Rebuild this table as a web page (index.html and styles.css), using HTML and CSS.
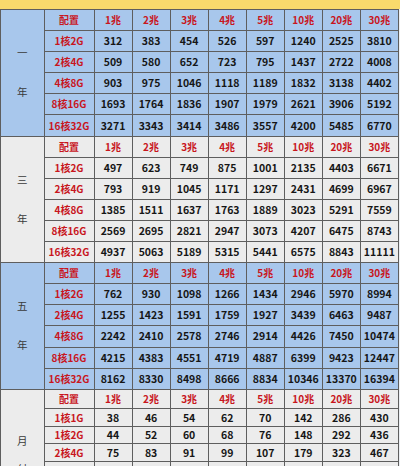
FILE: index.html
```html
<!DOCTYPE html>
<html lang="zh">
<head>
<meta charset="utf-8">
<link rel="stylesheet" href="styles.css">
</head>
<body>
<div class="band"></div>
<table class="price">
  <colgroup>
    <col class="c-side"><col class="c-cfg">
    <col class="c-n"><col class="c-n"><col class="c-n"><col class="c-n">
    <col class="c-n"><col class="c-n"><col class="c-n"><col class="c-n">
  </colgroup>
  <tbody class="blue">
    <tr class="head"><td class="side" rowspan="6"><div class="vlabel"><span>一</span><span>年</span></div></td><td class="red">配置</td><td class="red">1兆</td><td class="red">2兆</td><td class="red">3兆</td><td class="red">4兆</td><td class="red">5兆</td><td class="red">10兆</td><td class="red">20兆</td><td class="red">30兆</td></tr>
    <tr><td class="red">1核2G</td><td>312</td><td>383</td><td>454</td><td>526</td><td>597</td><td>1240</td><td>2525</td><td>3810</td></tr>
    <tr><td class="red">2核4G</td><td>509</td><td>580</td><td>652</td><td>723</td><td>795</td><td>1437</td><td>2722</td><td>4008</td></tr>
    <tr><td class="red">4核8G</td><td>903</td><td>975</td><td>1046</td><td>1118</td><td>1189</td><td>1832</td><td>3138</td><td>4402</td></tr>
    <tr><td class="red">8核16G</td><td>1693</td><td>1764</td><td>1836</td><td>1907</td><td>1979</td><td>2621</td><td>3906</td><td>5192</td></tr>
    <tr><td class="red">16核32G</td><td>3271</td><td>3343</td><td>3414</td><td>3486</td><td>3557</td><td>4200</td><td>5485</td><td>6770</td></tr>
  </tbody>
  <tbody class="grey">
    <tr class="head"><td class="side" rowspan="6"><div class="vlabel"><span>三</span><span>年</span></div></td><td class="red">配置</td><td class="red">1兆</td><td class="red">2兆</td><td class="red">3兆</td><td class="red">4兆</td><td class="red">5兆</td><td class="red">10兆</td><td class="red">20兆</td><td class="red">30兆</td></tr>
    <tr><td class="red">1核2G</td><td>497</td><td>623</td><td>749</td><td>875</td><td>1001</td><td>2135</td><td>4403</td><td>6671</td></tr>
    <tr><td class="red">2核4G</td><td>793</td><td>919</td><td>1045</td><td>1171</td><td>1297</td><td>2431</td><td>4699</td><td>6967</td></tr>
    <tr><td class="red">4核8G</td><td>1385</td><td>1511</td><td>1637</td><td>1763</td><td>1889</td><td>3023</td><td>5291</td><td>7559</td></tr>
    <tr><td class="red">8核16G</td><td>2569</td><td>2695</td><td>2821</td><td>2947</td><td>3073</td><td>4207</td><td>6475</td><td>8743</td></tr>
    <tr><td class="red">16核32G</td><td>4937</td><td>5063</td><td>5189</td><td>5315</td><td>5441</td><td>6575</td><td>8843</td><td>11111</td></tr>
  </tbody>
  <tbody class="blue">
    <tr class="head"><td class="side" rowspan="6"><div class="vlabel"><span>五</span><span>年</span></div></td><td class="red">配置</td><td class="red">1兆</td><td class="red">2兆</td><td class="red">3兆</td><td class="red">4兆</td><td class="red">5兆</td><td class="red">10兆</td><td class="red">20兆</td><td class="red">30兆</td></tr>
    <tr><td class="red">1核2G</td><td>762</td><td>930</td><td>1098</td><td>1266</td><td>1434</td><td>2946</td><td>5970</td><td>8994</td></tr>
    <tr><td class="red">2核4G</td><td>1255</td><td>1423</td><td>1591</td><td>1759</td><td>1927</td><td>3439</td><td>6463</td><td>9487</td></tr>
    <tr><td class="red">4核8G</td><td>2242</td><td>2410</td><td>2578</td><td>2746</td><td>2914</td><td>4426</td><td>7450</td><td>10474</td></tr>
    <tr><td class="red">8核16G</td><td>4215</td><td>4383</td><td>4551</td><td>4719</td><td>4887</td><td>6399</td><td>9423</td><td>12447</td></tr>
    <tr><td class="red">16核32G</td><td>8162</td><td>8330</td><td>8498</td><td>8666</td><td>8834</td><td>10346</td><td>13370</td><td>16394</td></tr>
  </tbody>
  <tbody class="grey month">
    <tr class="head"><td class="side top" rowspan="5"><div class="vlabel tight"><span>月</span><span>付</span></div></td><td class="red">配置</td><td class="red">1兆</td><td class="red">2兆</td><td class="red">3兆</td><td class="red">4兆</td><td class="red">5兆</td><td class="red">10兆</td><td class="red">20兆</td><td class="red">30兆</td></tr>
    <tr><td class="red">1核1G</td><td>38</td><td>46</td><td>54</td><td>62</td><td>70</td><td>142</td><td>286</td><td>430</td></tr>
    <tr><td class="red">1核2G</td><td>44</td><td>52</td><td>60</td><td>68</td><td>76</td><td>148</td><td>292</td><td>436</td></tr>
    <tr><td class="red">2核4G</td><td>75</td><td>83</td><td>91</td><td>99</td><td>107</td><td>179</td><td>323</td><td>467</td></tr>
    <tr><td class="red"></td><td></td><td></td><td></td><td></td><td></td><td></td><td></td><td></td></tr>
  </tbody>
</table>
</body>
</html>
```
FILE: styles.css
```css
html, body {
  margin: 0;
  padding: 0;
}
body {
  background: #eceff3;
  font-family: "Noto Sans CJK SC", "Noto Sans", sans-serif;
  width: 400px;
  overflow: hidden;
}
.band {
  height: 9px;
  background: #f9da6c;
}
.price {
  border-collapse: collapse;
  table-layout: fixed;
  width: 398px;
}
.c-side { width: 43.5px; }
.c-cfg { width: 50px; }
.c-n { width: 38.06px; }
.price td {
  border: 1px solid #5e5e5e;
  padding: 0;
  text-align: center;
  vertical-align: middle;
  font-size: 10.5px;
  font-weight: 700;
  color: #161616;
  line-height: 12px;
  white-space: nowrap;
}
.price tr { height: 21.1px; }
.month tr { height: 17.5px; }
.month tr.head { height: 19.7px; }
.blue td { background: #a8c7ec; }
.grey td { background: #ececec; }
.price td.red {
  color: #c8161d;
  font-size: 10px;
}
.price td.side {
  font-weight: 400;
  color: #3a3a3a;
  font-size: 10.5px;
}
.price td.side.top {
  vertical-align: top;
}
.vlabel {
  display: flex;
  flex-direction: column;
  align-items: center;
  gap: 27px;
}
.vlabel.tight {
  padding-top: 45px;
  gap: 16px;
}
```
